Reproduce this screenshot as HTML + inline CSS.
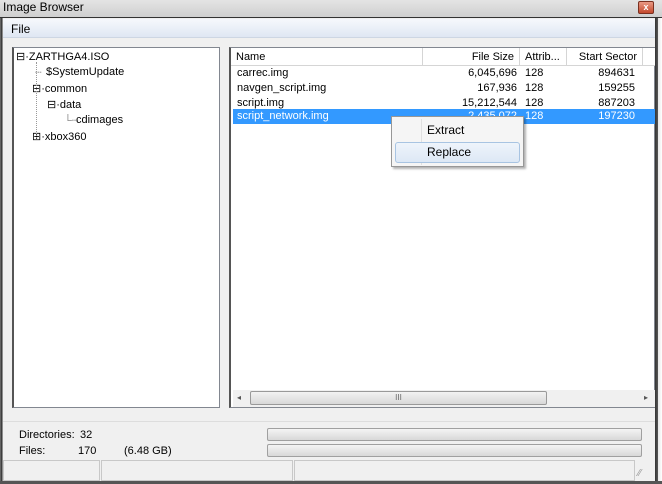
<!DOCTYPE html>
<html><head><style>
*{margin:0;padding:0;box-sizing:border-box}
body{width:662px;height:484px;overflow:hidden;background:#f0f0f0;font-family:"Liberation Sans",sans-serif;font-size:11px;color:#000;position:relative}
.a{position:absolute}
.title{left:0;top:0;width:662px;height:18px;background:linear-gradient(#e4e4e4,#cfcfcf);border-bottom:1px solid #333}
.title span{position:absolute;left:3px;top:0px;font-size:12px}
.close{left:638px;top:1px;width:16px;height:13px;background:linear-gradient(#e99a85,#c4482c);border:1px solid #7a3020;border-radius:2px;color:#fff;font-size:9px;text-align:center;line-height:11px;font-weight:bold}
.menu{left:3px;top:19px;width:652px;height:19px;background:linear-gradient(#f6f8fc,#dfe7f3);border-bottom:1px solid #cdd6e3}
.menu span{position:absolute;left:8px;top:3px;font-size:12px}
.frameL{left:0;top:18px;width:3px;height:466px;background:linear-gradient(90deg,#777,#333 60%,#ccc)}
.frameR{left:655px;top:18px;width:7px;height:466px;background:linear-gradient(90deg,#333,#555 40%,#e8e8e8 45%,#fff)}
.tree{left:12px;top:47px;width:208px;height:361px;background:#fff;border:1px solid #828790;border-left:2px solid #555}
.tree div{position:absolute;font-size:11px;white-space:nowrap}
.list{left:229px;top:47px;width:426px;height:361px;background:#fff;border:1px solid #828790;border-left:2px solid #555}
.hdr{left:0;top:0;width:424px;height:18px;background:#fff;border-bottom:1px solid #d5d5d5}
.hc{position:absolute;top:0;height:18px;border-right:1px solid #d5d5d5;line-height:18px;padding:0 5px}
.row{position:absolute;left:2px;width:422px;height:15px;line-height:15px}
.row span{position:absolute;top:0}
.sel{background:#3399ff;color:#fff}
.ctx{left:391px;top:116px;width:133px;height:51px;background:#f5f5f5;border:1px solid #979797;box-shadow:2px 2px 2px rgba(0,0,0,.3)}
.ctx .it{position:absolute;left:35px;font-size:12px}
.hs{left:2px;top:342px;width:422px;height:17px;background:#f0f0f0}
.prog{position:absolute;left:267px;width:375px;height:13px;border:1px solid #a0a0a0;border-radius:2px;background:linear-gradient(#f4f4f4,#d8d8d8)}
.st{position:absolute;top:460px;height:21px;border:1px solid #c8c8c8;background:#f0f0f0}
</style></head><body>
<div class="a title"><span>Image Browser</span></div>
<div class="a close">x</div>
<div class="a frameL"></div>
<div class="a frameR"></div>
<div class="a menu"><span>File</span></div>

<div class="a tree">
<div style="left:2px;top:2px">⊟·ZARTHGA4.ISO</div>
<div style="left:21px;top:18px;color:#888">┄</div><div style="left:32px;top:18px">$SystemUpdate</div>
<div style="left:18px;top:34px">⊟·common</div>
<div style="left:33px;top:50px">⊟·data</div>
<div style="left:50px;top:66px;color:#888">└┄</div><div style="left:62px;top:66px">cdimages</div>
<div style="left:18px;top:82px">⊞·xbox360</div>
<div style="left:22px;top:14px;width:0;height:76px;border-left:1px dotted #999"></div>
</div>

<div class="a list">
<div class="a hdr">
<div class="hc" style="left:0;width:192px">Name</div>
<div class="hc" style="left:192px;width:97px;text-align:right">File Size</div>
<div class="hc" style="left:289px;width:47px">Attrib...</div>
<div class="hc" style="left:336px;width:76px;text-align:right">Start Sector</div>
</div>
<div class="row" style="top:18px"><span style="left:4px">carrec.img</span><span style="right:138px">6,045,696</span><span style="left:292px">128</span><span style="right:20px">894631</span></div>
<div class="row" style="top:33px"><span style="left:4px">navgen_script.img</span><span style="right:138px">167,936</span><span style="left:292px">128</span><span style="right:20px">159255</span></div>
<div class="row" style="top:48px"><span style="left:4px">script.img</span><span style="right:138px">15,212,544</span><span style="left:292px">128</span><span style="right:20px">887203</span></div>
<div class="row sel" style="top:61px"><span style="left:4px">script_network.img</span><span style="right:138px">2,435,072</span><span style="left:292px">128</span><span style="right:20px">197230</span></div>
<div class="a hs">
<div class="a" style="left:4px;top:3px;font-size:8px;color:#555">◂</div>
<div class="a" style="left:17px;top:1px;width:297px;height:14px;border:1px solid #999;border-radius:2px;background:linear-gradient(#f2f2f2,#d8d8d8);text-align:center;font-size:8px;line-height:12px;color:#666">III</div>
<div class="a" style="left:411px;top:3px;font-size:8px;color:#555">▸</div>
</div>
</div>

<div class="a ctx">
<div class="a" style="left:29px;top:2px;width:1px;height:46px;background:#e0e0e0"></div>
<div class="it" style="top:6px">Extract</div>
<div class="a" style="left:3px;top:25px;width:125px;height:21px;border:1px solid #a8c4e2;border-radius:3px;background:linear-gradient(#eef4fb,#dde8f5)"></div>
<div class="it" style="top:28px">Replace</div>
</div>

<div class="a" style="left:3px;top:421px;width:652px;height:1px;background:#ddd"></div>
<div class="a" style="left:19px;top:429px;font-size:11px">Directories:</div>
<div class="a" style="left:80px;top:429px;font-size:11px">32</div>
<div class="a" style="left:19px;top:445px;font-size:11px">Files:</div>
<div class="a" style="left:78px;top:445px;font-size:11px">170</div>
<div class="a" style="left:124px;top:445px;font-size:11px">(6.48 GB)</div>
<div class="prog" style="top:428px"></div>
<div class="prog" style="top:444px"></div>

<div class="st" style="left:3px;width:97px"></div>
<div class="st" style="left:101px;width:192px"></div>
<div class="st" style="left:294px;width:341px"></div>
<div class="a" style="left:638px;top:468px;font-size:10px;color:#999">⁄⁄</div>
<div class="a" style="left:0;top:481px;width:662px;height:3px;background:#555"></div>
</body></html>
